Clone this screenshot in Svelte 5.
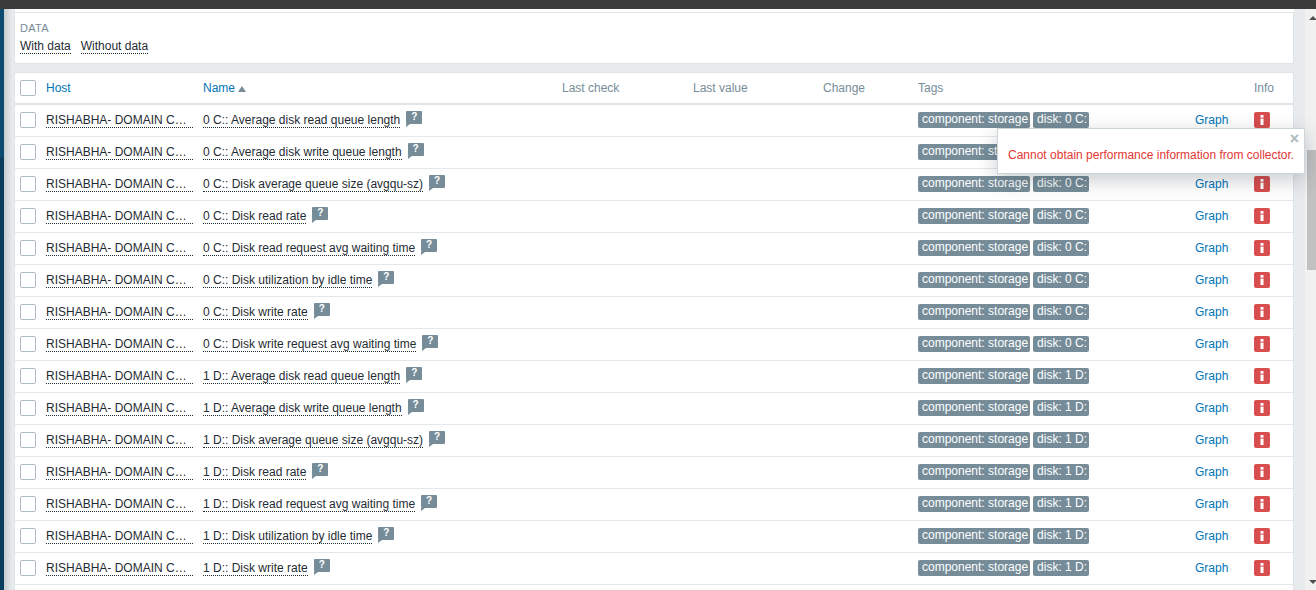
<script lang="ts">
	const metrics = [
		'Average disk read queue length',
		'Average disk write queue length',
		'Disk average queue size (avgqu-sz)',
		'Disk read rate',
		'Disk read request avg waiting time',
		'Disk utilization by idle time',
		'Disk write rate',
		'Disk write request avg waiting time'
	];
	const disks = ['0 C:', '1 D:'];
	const rows = disks.flatMap((disk) => metrics.map((metric) => ({ disk, metric })));
</script>

<div class="page">
	<div class="topbar"></div>
	<div class="body">
		<div class="sidebar"></div>
		<main class="content">
			<div class="strip"></div>
			<section class="filter">
				<h4 class="filter__title">DATA</h4>
				<div class="filter__links">
					<a class="dotted" href="#with">With data</a>
					<a class="dotted" href="#without">Without data</a>
				</div>
			</section>

			<section class="table">
				<div class="row row--head">
					<span class="check"></span>
					<a class="head-link" href="#host">Host</a>
					<span><a class="head-link" href="#name">Name</a><span class="sort"></span></span>
					<span>Last check</span>
					<span>Last value</span>
					<span>Change</span>
					<span>Tags</span>
					<span></span>
					<span>Info</span>
				</div>
				{#each rows as row}
					<div class="row">
						<span class="check"></span>
						<span class="host-cell"><a class="dotted host" href="#host">RISHABHA- DOMAIN CONTROLLER</a></span>
						<span class="name-cell">
							<a class="dotted" href="#item">{row.disk}: {row.metric}</a>
							<span class="hint">?</span>
						</span>
						<span></span>
						<span></span>
						<span></span>
						<span class="tags">
							<span class="tag">component: storage</span>
							<span class="tag">disk: {row.disk}</span>
						</span>
						<a class="graph" href="#graph">Graph</a>
						<span class="info">
							<svg width="16" height="16" viewBox="0 0 16 16" aria-hidden="true">
								<rect x="6.5" y="3" width="3" height="2.6" fill="#fff" />
								<rect x="6.5" y="6.6" width="3" height="6.4" fill="#fff" />
							</svg>
						</span>
					</div>
				{/each}
			</section>
		</main>
		<div class="scrollbar">
			<span class="scrollbar__up"></span>
			<span class="scrollbar__thumb"></span>
			<span class="scrollbar__down"></span>
		</div>
	</div>

	<div class="popup">
		<span class="popup__close">×</span>
		<p class="popup__msg">Cannot obtain performance information from collector.</p>
	</div>
</div>

<style>
	:global(body) {
		margin: 0;
		overflow: hidden;
	}

	.page {
		position: relative;
		display: flex;
		flex-direction: column;
		height: 590px;
		overflow: hidden;
		background: #e8ebee;
		font-family: 'Liberation Sans', Arial, sans-serif;
		font-size: 12px;
		color: #1f2c33;
	}

	.topbar {
		flex: none;
		height: 9px;
		background: #3b3b3b;
	}

	.body {
		display: flex;
		flex: 1;
		min-height: 0;
	}

	.sidebar {
		flex: none;
		width: 14px;
		background:
			linear-gradient(90deg, #0d4a70 0, #0d4a70 4px, transparent 4px) 0 0 / 100% 148px no-repeat,
			linear-gradient(90deg, #093d5d 0, #093d5d 4px, transparent 4px) 0 148px / 100% 100% no-repeat,
			linear-gradient(90deg, #c6cbce 4px, #e8ebee 12px);
	}

	.content {
		flex: none;
		width: 1280px;
		min-height: 0;
	}

	.strip {
		height: 3px;
		margin-left: 1px;
		background: #fff;
	}

	.filter {
		box-sizing: border-box;
		height: 52px;
		padding: 9px 5px 0;
		background: #fff;
		border: 1px solid #dfe4e7;
	}

	.filter__title {
		margin: 0;
		font-size: 11px;
		line-height: 13px;
		font-weight: 400;
		letter-spacing: 0.3px;
		color: #768d99;
	}

	.filter__links {
		display: flex;
		gap: 10px;
		margin-top: 4px;
		line-height: 14px;
	}

	.dotted {
		color: #1f2c33;
		text-decoration: none;
		border-bottom: 1px dotted #1f2c33;
	}

	.table {
		margin-top: 8px;
		background: #fff;
		border: 1px solid #dfe4e7;
		border-bottom: 0;
	}

	.row {
		box-sizing: border-box;
		display: grid;
		grid-template-columns: 26px 157px 359px 131px 130px 95px 277px 59px 1fr;
		align-items: center;
		height: 32px;
		padding: 0 0 1px 5px;
		border-bottom: 1px solid #e5e8ea;
	}

	.row--head {
		padding-bottom: 0;
		border-bottom: 2px solid #dfe4e7;
		color: #768d99;
	}

	.head-link {
		color: #0275b8;
		text-decoration: none;
	}

	.sort {
		display: inline-block;
		margin-left: 3px;
		border-left: 4px solid transparent;
		border-right: 4px solid transparent;
		border-bottom: 6px solid #768d99;
		vertical-align: 0;
	}

	.check {
		box-sizing: border-box;
		width: 16px;
		height: 16px;
		background: #fff;
		border: 1px solid #acbbc2;
		border-radius: 2px;
	}

	.host-cell {
		display: block;
		min-width: 0;
	}

	.host {
		display: block;
		width: 147px;
		overflow: hidden;
		white-space: nowrap;
		text-overflow: ellipsis;
		line-height: 14px;
	}

	.name-cell {
		display: flex;
		align-items: flex-start;
		gap: 6px;
		white-space: nowrap;
		line-height: 14px;
	}

	.hint {
		position: relative;
		flex: none;
		width: 16px;
		height: 13px;
		margin-top: -2px;
		background: #768d99;
		border-radius: 1px;
		color: #fff;
		font-size: 10px;
		font-weight: 700;
		line-height: 12px;
		text-align: center;
	}

	.hint::after {
		content: '';
		position: absolute;
		left: 0;
		top: 13px;
		border-top: 3px solid #768d99;
		border-right: 4px solid transparent;
	}

	.tags {
		display: flex;
		gap: 3px;
	}

	.tag {
		padding: 0 2px 0 4px;
		height: 16px;
		background: #768d99;
		border-radius: 2px;
		color: #fff;
		line-height: 15px;
		white-space: nowrap;
	}

	.graph {
		color: #0275b8;
		text-decoration: none;
	}

	.info {
		display: block;
		width: 16px;
		height: 16px;
		background: #d64e4e;
		border-radius: 2px;
	}

	.info svg {
		display: block;
	}

	.scrollbar {
		position: relative;
		flex: none;
		width: 11px;
		margin-left: 11px;
		background: #f1f1f1;
	}

	.scrollbar__thumb {
		position: absolute;
		top: 141px;
		left: 2px;
		right: 0;
		height: 120px;
		background: #c1c1c1;
	}

	.scrollbar__up,
	.scrollbar__down {
		position: absolute;
		left: 4px;
		border-left: 4px solid transparent;
		border-right: 4px solid transparent;
	}

	.scrollbar__up {
		top: 7px;
		border-bottom: 4px solid #505050;
	}

	.scrollbar__down {
		bottom: 6px;
		border-top: 4px solid #505050;
	}

	.popup {
		position: absolute;
		left: 997px;
		top: 128px;
		box-sizing: border-box;
		width: 308px;
		height: 46px;
		padding: 19px 10px 0;
		background: #fff;
		border: 1px solid #ccd5d9;
		box-shadow: 0 6px 20px rgba(31, 44, 51, 0.25);
	}

	.popup__close {
		position: absolute;
		top: 1px;
		right: 5px;
		color: #acbbc2;
		font-size: 16px;
		font-weight: 700;
		line-height: 18px;
	}

	.popup__msg {
		margin: 0;
		color: #e33734;
		line-height: 14px;
		white-space: nowrap;
	}
</style>
